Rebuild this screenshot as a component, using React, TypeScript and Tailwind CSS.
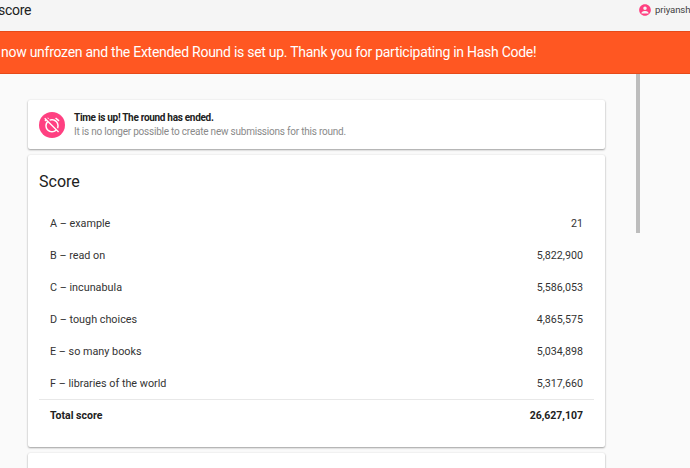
const rows = [
  { label: "A – example", score: "21" },
  { label: "B – read on", score: "5,822,900" },
  { label: "C – incunabula", score: "5,586,053" },
  { label: "D – tough choices", score: "4,865,575" },
  { label: "E – so many books", score: "5,034,898" },
  { label: "F – libraries of the world", score: "5,317,660" },
];

const cardClass = "bg-white rounded-[2px] shadow-[0_1px_2px_rgba(0,0,0,0.35),0_0_2px_rgba(0,0,0,0.08)]";

const AlarmOffIcon = () => (
  <svg viewBox="0 0 24 24" className="w-[18px] h-[18px] fill-white">
    <path d="M12 6c3.87 0 7 3.13 7 7 0 .84-.16 1.65-.43 2.4l1.52 1.52c.58-1.19.91-2.51.91-3.92 0-4.97-4.03-9-9-9-1.41 0-2.73.33-3.92.91L9.6 6.43C10.35 6.16 11.16 6 12 6zm10-.28l-4.6-3.86-1.29 1.53 4.6 3.86L22 5.72zM2.92 2.29L1.65 3.57 2.98 4.9l-1.11.93 1.42 1.42 1.11-.94.8.8C3.83 8.69 3 10.75 3 13c0 4.97 4.02 9 9 9 2.25 0 4.31-.83 5.89-2.2l2.2 2.2 1.27-1.27L3.89 3.27l-.97-.98zm13.55 16.1C15.26 19.39 13.7 20 12 20c-3.87 0-7-3.13-7-7 0-1.7.61-3.26 1.61-4.47l9.86 9.86zM8.02 3.28L6.6 1.86l-.86.71 1.42 1.42.86-.71z" />
  </svg>
);

const AccountIcon = () => (
  <svg viewBox="0 0 24 24" className="w-[14px] h-[14px] fill-[#ff4081]">
    <path d="M12 2C6.48 2 2 6.48 2 12s4.48 10 10 10 10-4.48 10-10S17.52 2 12 2zm0 4a3 3 0 1 1 0 6 3 3 0 0 1 0-6zm6 12H6v-1c0-2 4-3.1 6-3.1s6 1.1 6 3.1v1z" />
  </svg>
);

export default function App() {
  return (
    <div className="h-[468px] overflow-hidden bg-[#fafafa] font-['Roboto',sans-serif]">
      <header className="h-[31px] bg-[#f5f5f5] flex items-start justify-between">
        <span className="text-[14px] leading-[20px] -ml-[2px] tracking-[-0.3px] text-[#212121]">score</span>
        <div className="flex items-center gap-[3px] pt-[3px] whitespace-nowrap w-[52px] shrink-0">
          <span className="shrink-0 flex"><AccountIcon /></span>
          <span className="text-[9.6px] tracking-[-0.1px] text-[#424242]">priyansh</span>
        </div>
      </header>
      <div className="h-[43px] bg-[#ff5722] border-y border-y-[#e64a19] flex items-center pl-[1px] text-white text-[14px] tracking-[-0.27px] whitespace-nowrap">
        now unfrozen and the Extended Round is set up. Thank you for participating in Hash Code!
      </div>
      <main className="flex">
        <div className="w-[636px] shrink-0 pl-[28px] pr-[31px] pt-[26px] flex flex-col gap-[6px]">
          <section className={`${cardClass} h-[49px] flex items-center pl-[11px] gap-[9px]`}>
            <div className="w-[26px] h-[26px] rounded-full bg-[#ff4081] flex items-center justify-center shrink-0">
              <AlarmOffIcon />
            </div>
            <div>
              <p className="text-[10px] leading-[14px] tracking-[-0.3px] font-bold text-[#212121]">Time is up! The round has ended.</p>
              <p className="text-[10px] leading-[14px] tracking-[-0.22px] text-[#8a8a8a]">It is no longer possible to create new submissions for this round.</p>
            </div>
          </section>
          <section className={`${cardClass} h-[292px] px-[11px]`}>
            <h2 className="text-[16px] leading-[20px] pt-[17px] text-[#212121]">Score</h2>
            <div className="mt-[16px]">
              {rows.map((row) => (
                <div key={row.label} className="h-[32px] flex items-center justify-between px-[11px] text-[10.8px] text-[#333333]">
                  <span>{row.label}</span>
                  <span className="text-[10.7px]">{row.score}</span>
                </div>
              ))}
              <div className="h-[33px] -mt-[1px] border-t border-t-[#e8e8e8] flex items-center justify-between px-[11px] text-[10.5px] font-bold text-[#212121]">
                <span>Total score</span>
                <span>26,627,107</span>
              </div>
            </div>
          </section>
          <section className={`${cardClass} h-[60px]`} />
        </div>
        <div className="w-[4px] h-[159px] bg-[#bdbdbd] shrink-0" />
      </main>
    </div>
  );
}
